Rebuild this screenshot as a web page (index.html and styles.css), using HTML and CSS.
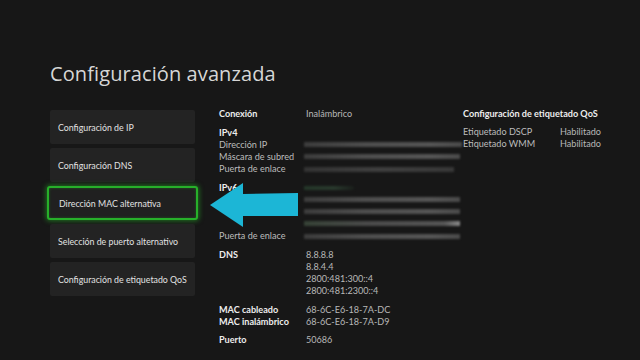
FILE: index.html
```html
<!DOCTYPE html>
<html lang="es">
<head>
<meta charset="utf-8">
<title>Configuración avanzada</title>
<link rel="stylesheet" href="styles.css">
</head>
<body>
<div class="page">
  <h1 class="title">Configuración avanzada</h1>
  <div class="main">
    <nav class="menu">
      <div class="item">Configuración de IP</div>
      <div class="item">Configuración DNS</div>
      <div class="item selected">Dirección MAC alternativa</div>
      <div class="item">Selección de puerto alternativo</div>
      <div class="item">Configuración de etiquetado QoS</div>
    </nav>
    <section class="details">
      <div class="info">
        <div class="row"><span class="label bold">Conexión</span><span class="val">Inalámbrico</span></div>

        <div class="group">
          <div class="row"><span class="label bold">IPv4</span></div>
          <div class="row"><span class="label">Dirección IP</span><span class="bar bar-long"></span></div>
          <div class="row"><span class="label">Máscara de subred</span><span class="bar"></span></div>
          <div class="row"><span class="label">Puerta de enlace</span><span class="bar bar-dim"></span></div>
        </div>

        <div class="group">
          <div class="row"><span class="label bold">IPv6</span><span class="bar bar-green"></span></div>
          <div class="row"><span class="label"></span><span class="bar"></span></div>
          <div class="row"><span class="label"></span><span class="bar"></span></div>
          <div class="row"><span class="label"></span><span class="bar bar-tint"></span></div>
          <div class="row"><span class="label">Puerta de enlace</span><span class="bar"></span></div>
        </div>

        <div class="group">
          <div class="row"><span class="label bold">DNS</span><span class="val">8.8.8.8</span></div>
          <div class="row"><span class="label"></span><span class="val">8.8.4.4</span></div>
          <div class="row"><span class="label"></span><span class="val">2800:481:300::4</span></div>
          <div class="row"><span class="label"></span><span class="val">2800:481:2300::4</span></div>
        </div>

        <div class="group">
          <div class="row"><span class="label bold">MAC cableado</span><span class="val">68-6C-E6-18-7A-DC</span></div>
          <div class="row"><span class="label bold">MAC inalámbrico</span><span class="val">68-6C-E6-18-7A-D9</span></div>
        </div>

        <div class="group">
          <div class="row"><span class="label bold">Puerto</span><span class="val">50686</span></div>
        </div>
      </div>

      <div class="qos">
        <div class="qos-title bold">Configuración de etiquetado QoS</div>
        <div class="qrow"><span class="qlabel">Etiquetado DSCP</span><span class="val">Habilitado</span></div>
        <div class="qrow"><span class="qlabel">Etiquetado WMM</span><span class="val">Habilitado</span></div>
      </div>
    </section>
  </div>
</div>

<svg class="arrow" width="100" height="50" viewBox="0 0 100 50" aria-hidden="true">
  <polygon points="0,22 33,0 33,11 88,10 88,33 33,33 33,44" fill="#1cb6d6"/>
</svg>
</body>
</html>
```

FILE: styles.css
```css
html, body {
  margin: 0;
  padding: 0;
}
body {
  width: 640px;
  height: 360px;
  overflow: hidden;
  background: #171717;
  font-family: "Lato", "Open Sans", sans-serif;
  color: #c4c4c4;
  position: relative;
}
.page {
  padding: 58px 0 0 50px;
}
.title {
  margin: 0;
  font-family: "Open Sans", "Noto Sans", sans-serif;
  font-size: 20px;
  font-weight: 400;
  line-height: 32px;
  color: #d6d6d6;
  letter-spacing: 0.1px;
}
.main {
  display: flex;
  margin-top: 20px;
}
.menu {
  width: 145px;
  display: flex;
  flex-direction: column;
  gap: 4px;
}
.item {
  height: 34px;
  background: #232323;
  border-radius: 2px;
  display: flex;
  align-items: center;
  padding-left: 8px;
  font-size: 8.8px;
  color: #e2e2e2;
  white-space: nowrap;
  box-sizing: border-box;
}
.item.selected {
  margin: 0 -3px;
  padding-left: 10px;
  border: 2px solid #27b02a;
  border-radius: 3px;
  box-shadow: 0 0 5px 1px rgba(40, 190, 40, 0.55), inset 0 0 3px rgba(40, 190, 40, 0.35);
  background: #202020;
}
.details {
  display: flex;
  margin-left: 24px;
  margin-top: -2px;
  font-size: 9.1px;
  line-height: 12.2px;
}
.info {
  width: 244px;
}
.row {
  display: flex;
  align-items: center;
  height: 12.1px;
}
.group {
  margin-top: 6.6px;
}
.label {
  width: 87px;
  flex: none;
  color: #bcbcbc;
  white-space: nowrap;
}
.bold {
  font-weight: 700;
  color: #ededed;
}
.val {
  color: #b8b8b8;
  white-space: nowrap;
}
.bar {
  display: block;
  margin-left: -2px;
  width: 156px;
  height: 5px;
  background: linear-gradient(90deg, #3c3c3c, #4e4e4e 40%, #555 80%, #4a4a4a);
  filter: blur(0.8px);
}
.bar-long {
  width: 158px;
}
.bar-dim {
  background: linear-gradient(90deg, #333, #3f3f3f 50%, #383838);
  width: 150px;
}
.bar-green {
  width: 50px;
  height: 4px;
  background: linear-gradient(90deg, #25382a, #2a3a2e 60%, #1b1f1c);
}
.bar-tint {
  background: linear-gradient(90deg, #364236, #4a4a4a 40%, #555 90%, #888);
}
.qos-title {
  height: 12.2px;
  white-space: nowrap;
}
.qrow {
  display: flex;
  height: 12.1px;
  align-items: center;
}
.qos-title + .qrow {
  margin-top: 6px;
}
.qlabel {
  width: 97px;
  color: #bcbcbc;
}
.arrow {
  position: absolute;
  left: 210px;
  top: 183px;
}
```
